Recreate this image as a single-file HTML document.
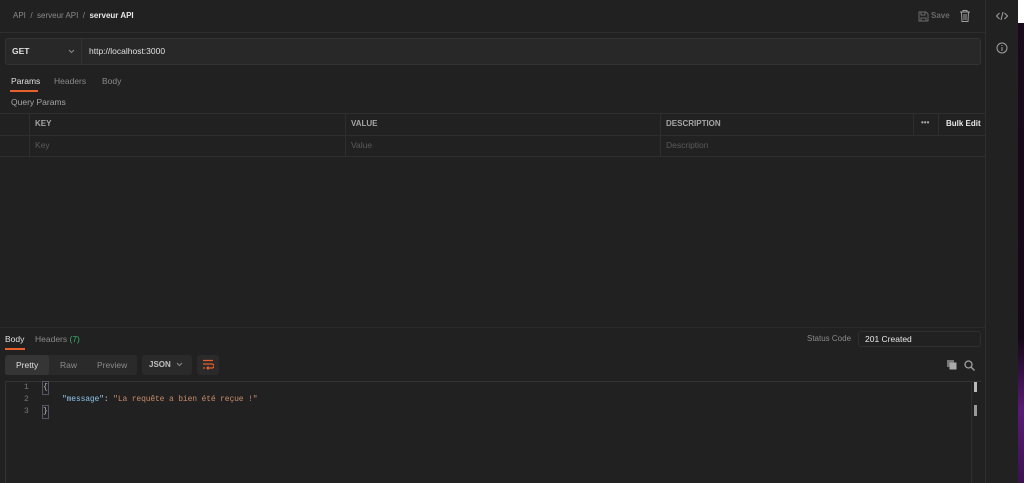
<!DOCTYPE html>
<html><head><meta charset="utf-8"><style>
*{margin:0;padding:0;box-sizing:border-box}
body{width:1024px;height:483px;background:#212121;font-family:"Liberation Sans",sans-serif;color:#a6a6a6;font-size:8.5px;position:relative;overflow:hidden}
.a{position:absolute}
.t{position:absolute;white-space:nowrap;line-height:1}
.b{font-weight:bold}
</style></head><body>
<div class="a" style="left:1018px;top:0;width:6px;height:483px;background:linear-gradient(#1a0a1c 0,#150816 70%,#5a1a78 85%,#3a1250 100%)"></div>
<div class="a" style="left:1018px;top:0;width:6px;height:23px;background:#fff"></div>
<div class="a" style="left:985px;top:0;width:1px;height:483px;background:#2e2e2e"></div>
<div class="a" style="left:0;top:32px;width:985px;height:1px;background:#2e2e2e"></div>
<div class="t" style="left:13px;top:12px;color:#8a8a8a;font-size:8px">API &nbsp;/&nbsp; serveur API &nbsp;/&nbsp; <span class="b" style="color:#e8e8e8">serveur API</span></div>
<svg class="a" style="left:918px;top:11px" width="11" height="11" viewBox="0 0 11 11" fill="none" stroke="#6a6a6a"><path d="M1 1h7l2 2v7H1z M3 1v3h4V1 M3 10V7h5v3"/></svg>
<div class="t b" style="left:931px;top:12px;color:#6a6a6a;font-size:8px">Save</div>
<svg class="a" style="left:960px;top:10px" width="10" height="12" viewBox="0 0 10 12" fill="none" stroke="#a0a0a0"><path d="M0 2h10M3 2V.5h4V2M1.5 2l.5 9.5h6l.5-9.5M4 4v6M6 4v6"/></svg>
<svg class="a" style="left:996px;top:11px" width="12" height="10" viewBox="0 0 12 10" fill="none" stroke="#a0a0a0"><path d="M3.5 2L.5 5l3 3M8.5 2l3 3-3 3M7 1L5 9"/></svg>
<svg class="a" style="left:996px;top:42px" width="12" height="12" viewBox="0 0 12 12" fill="none" stroke="#a0a0a0"><circle cx="6" cy="6" r="5"/><path d="M6 5v4M6 3v1"/></svg>
<div class="a" style="left:5px;top:38px;width:976px;height:27px;background:#282828;border:1px solid #333;border-radius:3px"></div>
<div class="a" style="left:81px;top:39px;width:1px;height:25px;background:#333"></div>
<div class="t b" style="left:12px;top:47px;color:#e0e0e0">GET</div>
<svg class="a" style="left:68px;top:49px" width="7" height="5" viewBox="0 0 7 5" fill="none" stroke="#8a8a8a"><path d="M1 1l2.5 2.5L6 1"/></svg>
<div class="t" style="left:89px;top:47px;color:#e0e0e0">http://localhost:3000</div>
<div class="t" style="left:11px;top:77px;color:#e0e0e0">Params</div>
<div class="t" style="left:54px;top:77px;color:#8a8a8a">Headers</div>
<div class="t" style="left:102px;top:77px;color:#8a8a8a">Body</div>
<div class="a" style="left:10px;top:90px;width:28px;height:2px;background:#e8602c"></div>
<div class="t" style="left:11px;top:98px;color:#a6a6a6">Query Params</div>
<div class="a" style="left:0;top:113px;width:985px;height:1px;background:#2e2e2e"></div>
<div class="a" style="left:0;top:135px;width:985px;height:1px;background:#2e2e2e"></div>
<div class="a" style="left:0;top:156px;width:985px;height:1px;background:#2e2e2e"></div>
<div class="a" style="left:29px;top:113px;width:1px;height:43px;background:#2e2e2e"></div>
<div class="a" style="left:345px;top:113px;width:1px;height:43px;background:#2e2e2e"></div>
<div class="a" style="left:660px;top:113px;width:1px;height:43px;background:#2e2e2e"></div>
<div class="a" style="left:913px;top:113px;width:1px;height:22px;background:#2e2e2e"></div>
<div class="a" style="left:938px;top:113px;width:1px;height:22px;background:#2e2e2e"></div>
<div class="t b" style="left:35px;top:120px;color:#a6a6a6;font-size:8px">KEY</div>
<div class="t b" style="left:351px;top:120px;color:#a6a6a6;font-size:8px">VALUE</div>
<div class="t b" style="left:666px;top:120px;color:#a6a6a6;font-size:8px">DESCRIPTION</div>
<div class="t b" style="left:921px;top:119px;color:#a6a6a6;font-size:8px">•••</div>
<div class="t b" style="left:946px;top:120px;color:#e8e8e8;font-size:8px">Bulk Edit</div>
<div class="t" style="left:35px;top:141px;color:#5a5a5a">Key</div>
<div class="t" style="left:351px;top:141px;color:#5a5a5a">Value</div>
<div class="t" style="left:666px;top:141px;color:#5a5a5a">Description</div>
<div class="a" style="left:0;top:327px;width:985px;height:1px;background:#2a2a2a"></div>
<div class="t" style="left:5px;top:335px;color:#e0e0e0">Body</div>
<div class="t" style="left:35px;top:335px;color:#8a8a8a">Headers <span style="color:#3cb371">(7)</span></div>
<div class="a" style="left:5px;top:348px;width:20px;height:2px;background:#e8602c"></div>
<div class="t" style="left:807px;top:335px;color:#8a8a8a;font-size:8px">Status Code</div>
<div class="a" style="left:858px;top:331px;width:123px;height:16px;border:1px solid #2e2e2e;border-radius:3px"></div>
<div class="t" style="left:865px;top:335px;color:#e8e8e8">201 Created</div>
<div class="a" style="left:5px;top:355px;width:132px;height:20px;background:#2a2a2a;border-radius:3px"></div>
<div class="a" style="left:5px;top:355px;width:44px;height:20px;background:#353535;border-radius:3px"></div>
<div class="t" style="left:16px;top:361px;color:#e0e0e0">Pretty</div>
<div class="t" style="left:60px;top:361px;color:#8a8a8a">Raw</div>
<div class="t" style="left:97px;top:361px;color:#8a8a8a">Preview</div>
<div class="a" style="left:142px;top:355px;width:50px;height:20px;background:#2a2a2a;border-radius:3px"></div>
<div class="t b" style="left:149px;top:361px;color:#c0c0c0;font-size:8px">JSON</div>
<svg class="a" style="left:176px;top:362px" width="7" height="5" viewBox="0 0 7 5" fill="none" stroke="#8a8a8a"><path d="M1 1l2.5 2.5L6 1"/></svg>
<div class="a" style="left:197px;top:355px;width:22px;height:20px;background:#2a2a2a;border-radius:3px"></div>
<svg class="a" style="left:202px;top:359px" width="12" height="11" viewBox="0 0 12 11" fill="none" stroke="#e8602c" stroke-width="1.3"><path d="M1 1.5h10M1 5h9a2 2 0 0 1 0 4H5M6.5 7.5L5 9l1.5 1.5M1 9h2"/></svg>
<svg class="a" style="left:947px;top:360px" width="10" height="10" viewBox="0 0 10 10"><rect x="0" y="0" width="7" height="7" fill="#777"/><rect x="2.5" y="2.5" width="7" height="7" fill="#aaa"/></svg>
<svg class="a" style="left:964px;top:360px" width="11" height="11" viewBox="0 0 11 11" fill="none" stroke="#a0a0a0" stroke-width="1.3"><circle cx="4.5" cy="4.5" r="3.5"/><path d="M7 7l3.5 3.5"/></svg>
<div class="a" style="left:5px;top:381px;width:976px;height:1px;background:#333"></div>
<div class="a" style="left:5px;top:381px;width:1px;height:102px;background:#333"></div>
<div class="a" style="left:971px;top:381px;width:1px;height:102px;background:#2e2e2e"></div>
<div class="a" style="left:974px;top:382px;width:3px;height:10px;background:#bbb"></div>
<div class="a" style="left:974px;top:405px;width:3px;height:11px;background:#999"></div>
<div style="position:absolute;left:0;top:382px;font-family:'Liberation Mono',monospace;font-size:8px;line-height:12px">
<div style="position:absolute;left:24px;top:0;color:#777">1</div>
<div style="position:absolute;left:24px;top:12px;color:#777">2</div>
<div style="position:absolute;left:24px;top:24px;color:#777">3</div>
<div style="position:absolute;left:43px;top:0;color:#bbb;outline:1px solid #556;white-space:nowrap">{</div>
<div style="position:absolute;left:62px;top:12px;white-space:nowrap;letter-spacing:-0.15px"><span style="color:#8cc4e8">"message"</span><span style="color:#ccc">: </span><span style="color:#c98a6a">"La requête a bien été reçue !"</span></div>
<div style="position:absolute;left:43px;top:24px;color:#bbb;outline:1px solid #556">}</div>
</div>
</body></html>
